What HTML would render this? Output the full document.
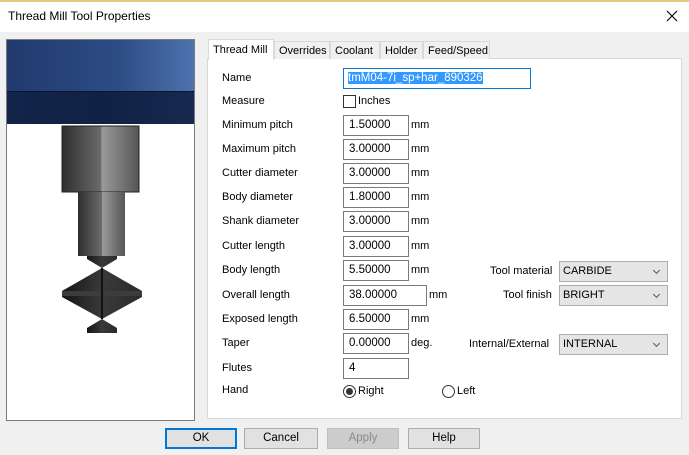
<!DOCTYPE html>
<html><head><style>
*{margin:0;padding:0;box-sizing:border-box}
body{width:689px;height:455px;background:#f0f0f0;font-family:"Liberation Sans",sans-serif;font-size:11px;color:#000;position:relative;overflow:hidden}
.a{position:absolute;white-space:nowrap}
.in{position:absolute;background:#fff;border:1px solid #7a7a7a;height:21px;padding:3px 0 0 5px;font-size:11.5px}
.dd{position:absolute;background:#e5e5e5;border:1px solid #acacac;height:21px;width:109px;left:559px;padding:3px 0 0 3px}
.dd:after{content:"";position:absolute;right:8px;top:6px;width:4px;height:4px;border-right:1px solid #555;border-bottom:1px solid #555;transform:rotate(45deg)}
.btn{position:absolute;top:428px;height:21px;background:#e1e1e1;border:1px solid #adadad;text-align:center;padding-top:3px;font-size:11.5px}
.tab{position:absolute;top:41px;height:18px;border:1px solid #d9d9d9;border-bottom:none;background:#f0f0f0;padding:3px 0 0 4px}
</style></head><body>
<div class="a" style="left:0;top:0;width:689px;height:2px;background:#e4c87a"></div>
<div class="a" style="left:0;top:2px;width:689px;height:30px;background:#fff"></div>
<div class="a" style="left:8px;top:9px;font-size:12px">Thread Mill Tool Properties</div>
<svg class="a" style="left:666px;top:10px" width="12" height="12" viewBox="0 0 12 12"><path d="M1 1L11 11M11 1L1 11" stroke="#000" stroke-width="1.1"/></svg>

<div class="a" style="left:6px;top:39px;width:189px;height:382px;border:1px solid #7a7a7a;background:#fff;overflow:hidden">
 <div style="height:51px;background:linear-gradient(90deg,#203a6c,#2d4c86 60%,#4d72ad)"></div>
 <div style="height:1px;background:#0a1530"></div>
 <div style="height:32px;background:linear-gradient(90deg,#13244a,#102145 50%,#16294f)"></div>
 <svg width="189" height="300" style="display:block" viewBox="0 0 189 300">
  <defs><linearGradient id="g" x1="0" x2="1"><stop offset="0" stop-color="#2e2e2e"/><stop offset=".5" stop-color="#6a6a6a"/><stop offset=".52" stop-color="#9a9a9a"/><stop offset="1" stop-color="#555"/></linearGradient>
  <linearGradient id="h" x1="0" x2="1"><stop offset="0" stop-color="#151515"/><stop offset=".5" stop-color="#3a3a3a"/><stop offset="1" stop-color="#2a2a2a"/></linearGradient></defs>
  <rect x="55" y="2" width="77" height="66" fill="url(#g)" stroke="#222"/>
  <rect x="71" y="68" width="47" height="64" fill="url(#g)"/>
  <path d="M80 132h30v3l-15 9l-15-9z" fill="url(#h)"/>
  <path d="M95 144L55 167v6l40 22l40-22v-6z" fill="url(#h)"/>
  <rect x="55" y="167" width="80" height="5" fill="#3c3c3c"/>
  <path d="M95 195l-15 9v5h30v-5z" fill="url(#h)"/>
  <rect x="94" y="144" width="2" height="51" fill="#111"/>
 </svg>
</div>

<div class="a" style="left:207px;top:58px;width:475px;height:361px;background:#fff;border:1px solid #d9d9d9"></div>
<div class="tab" style="left:208px;top:39px;width:66px;height:21px;background:#fff;padding-top:4px">Thread Mill</div>
<div class="tab" style="left:274px;width:56px">Overrides</div>
<div class="tab" style="left:330px;width:50px">Coolant</div>
<div class="tab" style="left:380px;width:43px">Holder</div>
<div class="tab" style="left:423px;width:67px">Feed/Speed</div>

<div class="a" style="left:222px;top:72px">Name</div>
<div class="in" style="left:343px;top:68px;width:188px;border-color:#0078d7;padding-left:4px"><span style="background:#3399ff;color:#fff">tmM04-7i_sp+har_890326</span></div>
<div class="a" style="left:222px;top:95px">Measure</div>
<div class="a" style="left:343px;top:95px;width:13px;height:13px;border:1px solid #333;background:#fff"></div>
<div class="a" style="left:358px;top:95px">Inches</div>

<div class="a" style="left:222px;top:119px">Minimum pitch</div><div class="in" style="left:343px;top:115px;width:66px">1.50000</div><div class="a" style="left:411px;top:119px">mm</div>
<div class="a" style="left:222px;top:143px">Maximum pitch</div><div class="in" style="left:343px;top:139px;width:66px">3.00000</div><div class="a" style="left:411px;top:143px">mm</div>
<div class="a" style="left:222px;top:167px">Cutter diameter</div><div class="in" style="left:343px;top:163px;width:66px">3.00000</div><div class="a" style="left:411px;top:167px">mm</div>
<div class="a" style="left:222px;top:191px">Body diameter</div><div class="in" style="left:343px;top:187px;width:66px">1.80000</div><div class="a" style="left:411px;top:191px">mm</div>
<div class="a" style="left:222px;top:215px">Shank diameter</div><div class="in" style="left:343px;top:211px;width:66px">3.00000</div><div class="a" style="left:411px;top:215px">mm</div>
<div class="a" style="left:222px;top:240px">Cutter length</div><div class="in" style="left:343px;top:236px;width:66px">3.00000</div><div class="a" style="left:411px;top:240px">mm</div>
<div class="a" style="left:222px;top:264px">Body length</div><div class="in" style="left:343px;top:260px;width:66px">5.50000</div><div class="a" style="left:411px;top:264px">mm</div>
<div class="a" style="left:222px;top:289px">Overall length</div><div class="in" style="left:343px;top:285px;width:84px">38.00000</div><div class="a" style="left:429px;top:289px">mm</div>
<div class="a" style="left:222px;top:313px">Exposed length</div><div class="in" style="left:343px;top:309px;width:66px">6.50000</div><div class="a" style="left:411px;top:313px">mm</div>
<div class="a" style="left:222px;top:337px">Taper</div><div class="in" style="left:343px;top:333px;width:66px">0.00000</div><div class="a" style="left:411px;top:337px">deg.</div>
<div class="a" style="left:222px;top:362px">Flutes</div><div class="in" style="left:343px;top:358px;width:66px">4</div>
<div class="a" style="left:222px;top:384px">Hand</div>
<div class="a" style="left:343px;top:385px;width:13px;height:13px;border:1px solid #333;border-radius:50%;background:#fff"><div style="margin:2px;width:7px;height:7px;border-radius:50%;background:#333"></div></div>
<div class="a" style="left:358px;top:385px">Right</div>
<div class="a" style="left:442px;top:385px;width:13px;height:13px;border:1px solid #333;border-radius:50%;background:#fff"></div>
<div class="a" style="left:457px;top:385px">Left</div>

<div class="a" style="left:490px;top:265px">Tool material</div><div class="dd" style="top:261px">CARBIDE</div>
<div class="a" style="left:503px;top:289px">Tool finish</div><div class="dd" style="top:285px">BRIGHT</div>
<div class="a" style="left:469px;top:338px">Internal/External</div><div class="dd" style="top:334px">INTERNAL</div>

<div class="btn" style="left:165px;width:72px;border:2px solid #0078d7;padding-top:2px">OK</div>
<div class="btn" style="left:244px;width:74px">Cancel</div>
<div class="btn" style="left:327px;width:72px;background:#ccc;border-color:#bfbfbf;color:#8a8a8a">Apply</div>
<div class="btn" style="left:408px;width:72px">Help</div>
</body></html>
